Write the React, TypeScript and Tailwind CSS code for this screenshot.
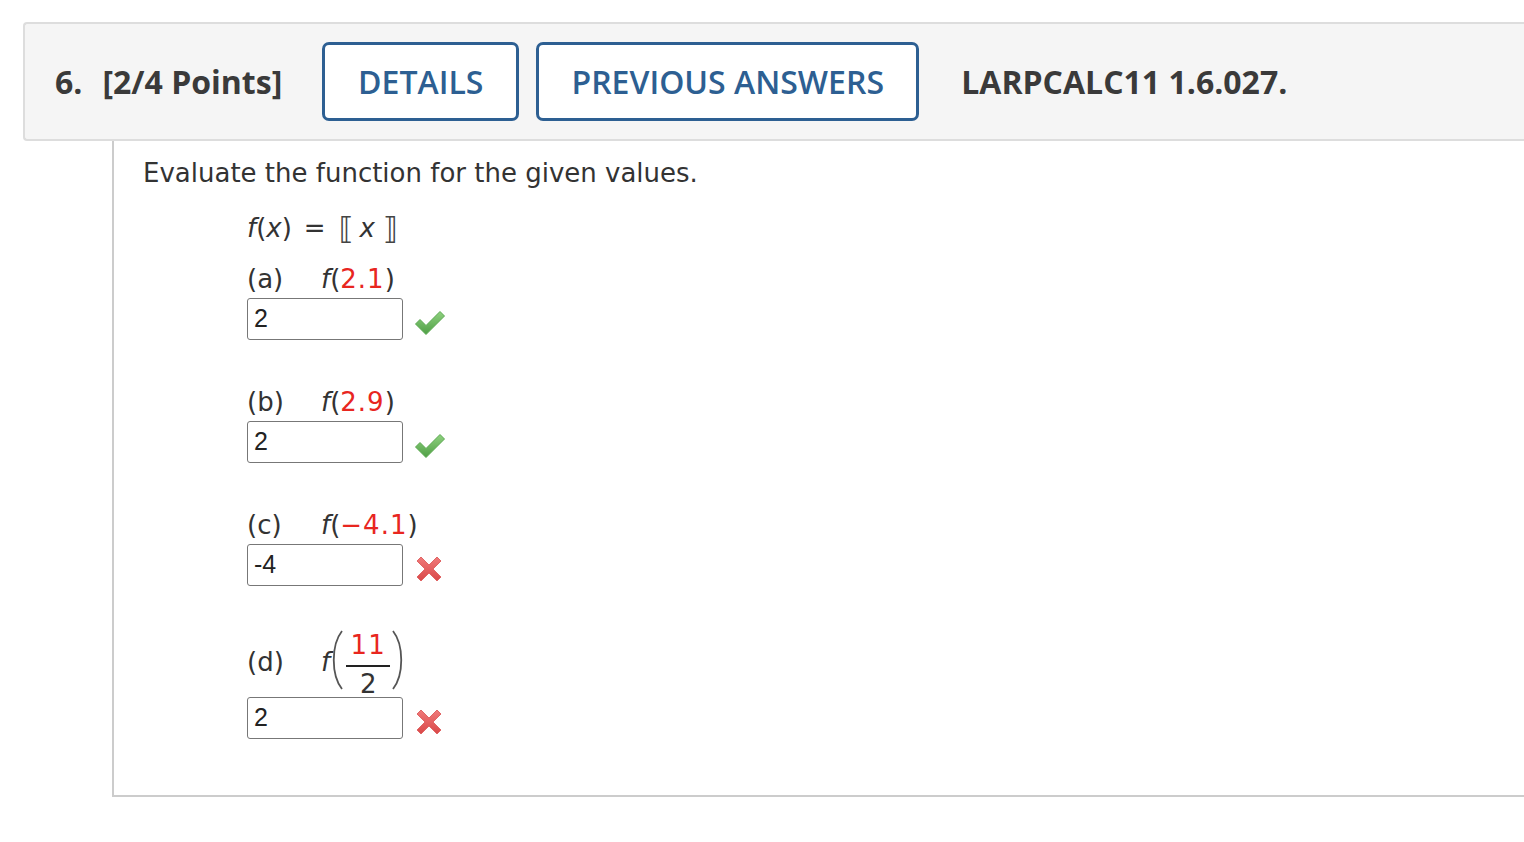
import React from 'react';

const CheckIcon: React.FC = () => (
  <svg width="32" height="28" viewBox="0 0 32 28" className="shrink-0">
    <defs>
      <linearGradient id="chk" x1="0" y1="0" x2="0" y2="1">
        <stop offset="0" stopColor="#8fd17f" />
        <stop offset="1" stopColor="#4f9f45" />
      </linearGradient>
    </defs>
    <path
      d="M1.5 15 L6 10.5 L12 16.5 L26 2.5 L30.5 7 L12 25.5 Z"
      fill="url(#chk)"
      stroke="#5aa950"
      strokeWidth="1"
      strokeLinejoin="round"
    />
  </svg>
);

const CrossIcon: React.FC = () => (
  <svg width="30" height="28" viewBox="0 0 30 28" className="shrink-0">
    <defs>
      <linearGradient id="crs" x1="0" y1="0" x2="0" y2="1">
        <stop offset="0" stopColor="#f07a7a" />
        <stop offset="1" stopColor="#d94848" />
      </linearGradient>
    </defs>
    <path
      d="M3 6 L7 2 L15 10 L23 2 L27 6 L19 14 L27 22 L23 26 L15 18 L7 26 L3 22 L11 14 Z"
      fill="url(#crs)"
      stroke="#e06565"
      strokeWidth="1"
      strokeLinejoin="round"
    />
  </svg>
);

// tall stretched delimiter around the fraction
const Paren: React.FC<{ right?: boolean }> = ({ right }) => (
  <svg width="14" height="60" viewBox="0 0 14 60" className="shrink-0 self-start mt-[2px]">
    <path
      d={right ? 'M2 1 C13 15 13 45 2 59' : 'M12 1 C1 15 1 45 12 59'}
      fill="none"
      stroke="#555"
      strokeWidth="1.8"
    />
  </svg>
);

const AnswerBox: React.FC<{ value: string; correct: boolean }> = ({ value, correct }) => (
  <div className="flex items-center gap-[11px]">
    <div className="w-[156px] h-[42px] border-[1.5px] border-[#777] rounded-[3px] bg-white flex items-center pl-[6px] text-[25px] text-[#222] font-['Liberation_Sans',Arial,sans-serif]">
      {value}
    </div>
    <div className="mt-[8px]">{correct ? <CheckIcon /> : <CrossIcon />}</div>
  </div>
);

const PartLabel: React.FC<{ label: string; children: React.ReactNode }> = ({ label, children }) => (
  <div className="flex items-center h-[32px]">
    <span className="w-[74px]">({label})</span>
    <span>{children}</span>
  </div>
);

const App: React.FC = () => {
  return (
    <div className="min-h-[842px] bg-white pt-[22px]">
      {/* Question header */}
      <div className="ml-[23px] h-[119px] bg-[#f5f5f5] border-2 border-r-0 border-[#dddddd] rounded-l-[4px] flex items-center pl-[30px] font-['Open_Sans',sans-serif]">
        <span className="text-[32px] font-bold text-[#3a3a3a]">6.</span>
        <span className="ml-[20px] text-[32px] font-bold text-[#3a3a3a]">[2/4 Points]</span>
        <button className="ml-[40px] w-[197px] h-[79px] border-[3px] border-[#2d5f92] rounded-[7px] bg-white text-[32px] font-semibold text-[#2d5f92]">
          DETAILS
        </button>
        <button className="ml-[17px] w-[383px] h-[79px] border-[3px] border-[#2d5f92] rounded-[7px] bg-white text-[32px] font-semibold text-[#2d5f92]">
          PREVIOUS ANSWERS
        </button>
        <span className="ml-[42px] text-[32px] font-bold text-[#3a3a3a]">LARPCALC11 1.6.027.</span>
      </div>

      {/* Question body */}
      <div className="ml-[112px] h-[656px] border-l-2 border-b-2 border-[#cccccc] pt-[16px] pl-[29px] text-[26px] text-[#333] font-['DejaVu_Sans',Verdana,sans-serif]">
        <div className="h-[32px] flex items-center">Evaluate the function for the given values.</div>

        <div className="ml-[104px]">
          <div className="mt-[23px] h-[32px] flex items-center">
            <span>
              <i>f</i>(<i>x</i>)
            </span>
            <span className="ml-[12px]">=</span>
            <span className="ml-[13px] text-[30px] text-[#444]">⟦</span>
            <i className="ml-[6px]">x</i>
            <span className="ml-[8px] text-[30px] text-[#444]">⟧</span>
          </div>

          <div className="mt-[19px]">
            <PartLabel label="a">
              <i>f</i>(<span className="text-[#e8261f] tracking-[1px]">2.1</span>)
            </PartLabel>
            <div className="mt-[3px]">
              <AnswerBox value="2" correct />
            </div>
          </div>

          <div className="mt-[46px]">
            <PartLabel label="b">
              <i>f</i>(<span className="text-[#e8261f] tracking-[1px]">2.9</span>)
            </PartLabel>
            <div className="mt-[3px]">
              <AnswerBox value="2" correct />
            </div>
          </div>

          <div className="mt-[46px]">
            <PartLabel label="c">
              <i>f</i>(<span className="text-[#e8261f] tracking-[1px]">−4.1</span>)
            </PartLabel>
            <div className="mt-[3px]">
              <AnswerBox value="-4" correct={false} />
            </div>
          </div>

          <div className="mt-[42px]">
            <div className="flex items-center h-[69px]">
              <span className="w-[74px]">(d)</span>
              <i>f</i>
              <Paren />
              <span className="ml-[2px] mt-[2px] flex flex-col items-center w-[44px] self-start">
                <span className="text-[#e8261f] leading-[30px] tracking-[1px]">11</span>
                <span className="mt-[5px] w-[44px] h-[2px] bg-[#222]" />
                <span className="mt-[2px] leading-[30px]">2</span>
              </span>
              <span className="ml-[1px] flex self-start">
                <Paren right />
              </span>
            </div>
            <AnswerBox value="2" correct={false} />
          </div>
        </div>
      </div>
    </div>
  );
};

export default App;
